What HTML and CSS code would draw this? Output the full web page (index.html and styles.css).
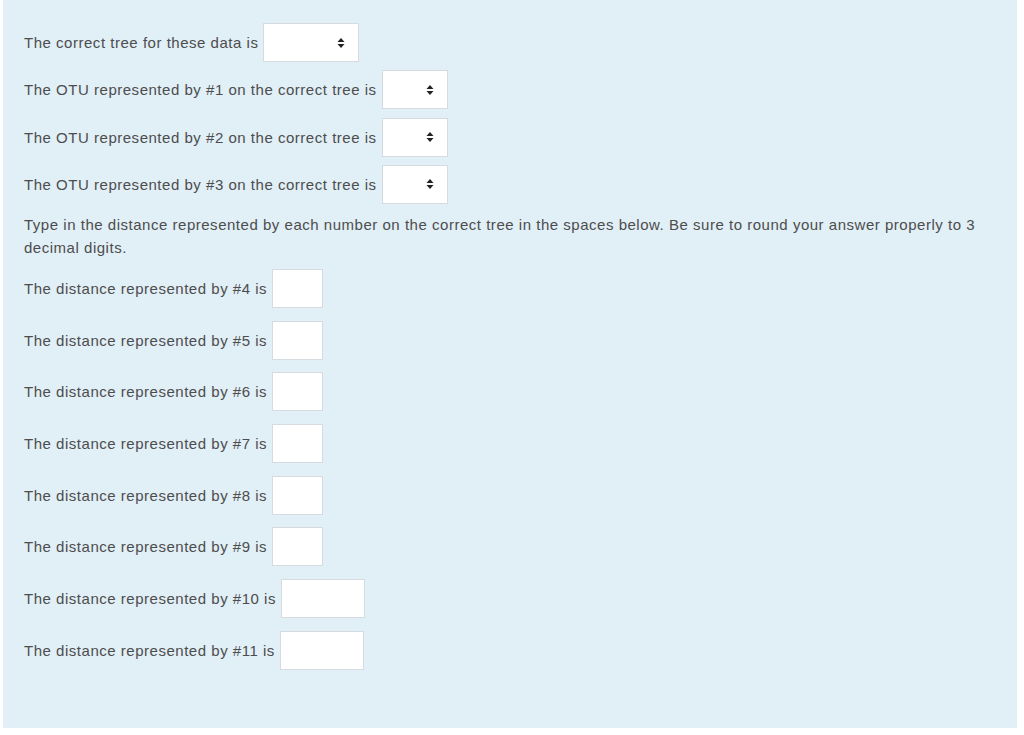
FILE: index.html
```html
<!DOCTYPE html>
<html>
<head>
<meta charset="utf-8">
<link rel="stylesheet" href="styles.css">
</head>
<body>
<div class="panel">
  <div class="row sel-row">
    <span class="lbl">The correct tree for these data is</span>
    <span class="select w96"><svg class="arrows" width="8" height="10" viewBox="0 0 8 10"><path d="M4 0 L7.5 4 H0.5 Z M4 10 L7.5 6 H0.5 Z" fill="#222"/></svg></span>
  </div>
  <div class="row sel-row">
    <span class="lbl">The OTU represented by #1 on the correct tree is</span>
    <span class="select w66"><svg class="arrows" width="8" height="10" viewBox="0 0 8 10"><path d="M4 0 L7.5 4 H0.5 Z M4 10 L7.5 6 H0.5 Z" fill="#222"/></svg></span>
  </div>
  <div class="row sel-row">
    <span class="lbl">The OTU represented by #2 on the correct tree is</span>
    <span class="select w66"><svg class="arrows" width="8" height="10" viewBox="0 0 8 10"><path d="M4 0 L7.5 4 H0.5 Z M4 10 L7.5 6 H0.5 Z" fill="#222"/></svg></span>
  </div>
  <div class="row sel-row">
    <span class="lbl">The OTU represented by #3 on the correct tree is</span>
    <span class="select w66"><svg class="arrows" width="8" height="10" viewBox="0 0 8 10"><path d="M4 0 L7.5 4 H0.5 Z M4 10 L7.5 6 H0.5 Z" fill="#222"/></svg></span>
  </div>
  <p class="para">Type in the distance represented by each number on the correct tree in the spaces below. Be sure to round your answer properly to 3 decimal digits.</p>
  <div class="dist">
    <div class="row"><span class="lbl">The distance represented by #4 is</span><span class="input w50"></span></div>
    <div class="row"><span class="lbl">The distance represented by #5 is</span><span class="input w50"></span></div>
    <div class="row"><span class="lbl">The distance represented by #6 is</span><span class="input w50"></span></div>
    <div class="row"><span class="lbl">The distance represented by #7 is</span><span class="input w50"></span></div>
    <div class="row"><span class="lbl">The distance represented by #8 is</span><span class="input w50"></span></div>
    <div class="row"><span class="lbl">The distance represented by #9 is</span><span class="input w50"></span></div>
    <div class="row"><span class="lbl">The distance represented by #10 is</span><span class="input w84"></span></div>
    <div class="row"><span class="lbl">The distance represented by #11 is</span><span class="input w84"></span></div>
  </div>
</div>
</body>
</html>
```
FILE: styles.css
```css
html, body {
  margin: 0;
  padding: 0;
  background: #ffffff;
}
body {
  font-family: "Liberation Sans", Arial, sans-serif;
  font-size: 15px;
  letter-spacing: 0.52px;
  color: #4d4d4d;
}
.panel {
  margin-left: 3px;
  width: 1014px;
  height: 728px;
  box-sizing: border-box;
  background: #e1eff7;
  padding: 23px 21px 0 21px;
}
.row {
  display: flex;
  align-items: center;
  gap: 5px;
  height: 39px;
}
.sel-row {
  margin-bottom: 8.3px;
}
.select, .input {
  display: flex;
  align-items: center;
  justify-content: flex-end;
  box-sizing: border-box;
  height: 39px;
  background: #ffffff;
  border: 1px solid #d6dbe0;
}
.arrows {
  margin-right: 13px;
}
.w96 { width: 96px; }
.w66 { width: 66px; }
.w50 { width: 51px; }
.w84 { width: 84px; }
.para {
  margin: 9.6px 0 9.5px 0;
  line-height: 23px;
}
.dist {
  display: flex;
  flex-direction: column;
  gap: 12.7px;
}
```
